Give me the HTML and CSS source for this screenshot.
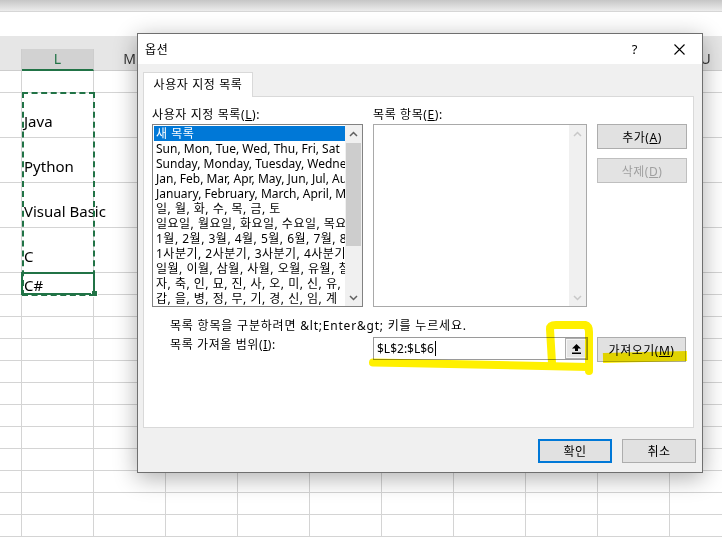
FILE: index.html
```html
<!DOCTYPE html>
<html lang="ko">
<head>
  <meta charset="UTF-8">
  <title>옵션 - 사용자 지정 목록</title>
  <link rel="stylesheet" href="styles.css">
</head>
<body>
  <div class="ribbon-edge"></div>
  <div class="formula-gap"></div>
  <div class="sheet-strip"></div>

  <div class="sheet">
    <div class="row head">
      <span></span><span class="on">L</span><span>M</span><span>N</span><span>O</span><span>P</span>
      <span>Q</span><span>R</span><span>S</span><span>T</span><span>U</span>
    </div>
    <div class="row"></div>
    <div class="row tall"><span class="cell">Java</span></div>
    <div class="row tall"><span class="cell">Python</span></div>
    <div class="row tall"><span class="cell">Visual Basic</span></div>
    <div class="row tall"><span class="cell">C</span></div>
    <div class="row"><span class="cell active">C#</span></div>
    <div class="row"></div>
    <div class="row"></div>
    <div class="row"></div>
    <div class="row"></div>
    <div class="row"></div>
    <div class="row"></div>
    <div class="row"></div>
    <div class="row"></div>
    <div class="row"></div>
    <div class="row"></div>
    <div class="row"></div>
  </div>

  <!-- copy marquee over L2:L6 -->
  <div class="marquee"></div>

  <div class="dialog">
    <div class="titlebar">
      <span class="title">옵션</span>
      <span class="tb-btn">?</span>
      <span class="tb-btn">
        <svg width="11" height="11" viewBox="0 0 11 11"><path d="M0.5 0.5 L10.5 10.5 M10.5 0.5 L0.5 10.5" stroke="#000" stroke-width="1.1" fill="none"/></svg>
      </span>
    </div>

    <div class="dlg-body">
      <div class="tabs"><div class="tab">사용자 지정 목록</div></div>

      <div class="panel">
        <div class="panel-grid">
          <div class="lbl">사용자 지정 목록(<u>L</u>):</div>
          <div class="lbl">목록 항목(<u>E</u>):</div>
          <span></span>

          <div class="listbox">
            <div class="items">
              <div class="item sel ko">새 목록</div>
              <div class="item">Sun, Mon, Tue, Wed, Thu, Fri, Sat</div>
              <div class="item">Sunday, Monday, Tuesday, Wednesday, Thursday, Friday, Saturday</div>
              <div class="item">Jan, Feb, Mar, Apr, May, Jun, Jul, Aug, Sep, Oct, Nov, Dec</div>
              <div class="item">January, February, March, April, May, June, July, August</div>
              <div class="item ko">일, 월, 화, 수, 목, 금, 토</div>
              <div class="item ko">일요일, 월요일, 화요일, 수요일, 목요일, 금요일, 토요일</div>
              <div class="item ko">1월, 2월, 3월, 4월, 5월, 6월, 7월, 8월, 9월, 10월, 11월, 12월</div>
              <div class="item ko">1사분기, 2사분기, 3사분기, 4사분기</div>
              <div class="item ko">일월, 이월, 삼월, 사월, 오월, 유월, 칠월, 팔월, 구월, 시월</div>
              <div class="item ko">자, 축, 인, 묘, 진, 사, 오, 미, 신, 유, 술, 해</div>
              <div class="item ko">갑, 을, 병, 정, 무, 기, 경, 신, 임, 계</div>
            </div>
            <div class="sb">
              <div class="sb-arrow"><svg width="9" height="6" viewBox="0 0 9 6"><polyline points="1,5 4.5,1.5 8,5" fill="none" stroke="#606060" stroke-width="1.5"/></svg></div>
              <div class="sb-track"><div class="sb-thumb"></div></div>
              <div class="sb-arrow"><svg width="9" height="6" viewBox="0 0 9 6"><polyline points="1,1 4.5,4.5 8,1" fill="none" stroke="#606060" stroke-width="1.5"/></svg></div>
            </div>
          </div>

          <div class="listbox empty">
            <div class="items"></div>
            <div class="sb">
              <div class="sb-arrow"><svg width="9" height="6" viewBox="0 0 9 6"><polyline points="1,5 4.5,1.5 8,5" fill="none" stroke="#c8c8c8" stroke-width="1.5"/></svg></div>
              <div class="sb-track"></div>
              <div class="sb-arrow"><svg width="9" height="6" viewBox="0 0 9 6"><polyline points="1,1 4.5,4.5 8,1" fill="none" stroke="#c8c8c8" stroke-width="1.5"/></svg></div>
            </div>
          </div>

          <div class="side-btns">
            <button class="btn">추가(<u>A</u>)</button>
            <button class="btn" disabled>삭제(<u>D</u>)</button>
          </div>

          <div class="hint">목록 항목을 구분하려면 &amp;lt;Enter&amp;gt; 키를 누르세요.</div>

          <div class="lbl indent">목록 가져올 범위(<u>I</u>):</div>
          <div class="ref-input">
            <span class="ref-value">$L$2:$L$6<i class="caret"></i></span>
            <span class="ref-btn">
              <svg width="9" height="10" viewBox="0 0 9 10"><path d="M4.5 0 L9 4.5 L6 4.5 L6 7 L3 7 L3 4.5 L0 4.5 Z M0 8.5 H9 V10 H0 Z" fill="#000"/></svg>
            </span>
          </div>
          <button class="btn import">가져오기(<u>M</u>)</button>
        </div>
      </div>

      <div class="footer">
        <button class="btn primary">확인</button>
        <button class="btn">취소</button>
      </div>
    </div>
  </div>

  <!-- highlighter marks drawn on the screenshot -->
  <svg class="marks" width="722" height="537" viewBox="0 0 722 537">
    <path d="M373 362.5 C450 364 530 366 588 367" />
    <path d="M552 363 L550 329 Q550 325 556 325 L585 325 Q589 326 589 332 L589 371" />
    <path class="flat" d="M603 358 L687 356" />
  </svg>
</body>
</html>
```

FILE: styles.css
```css
body {
  margin: 0;
  width: 722px;
  height: 537px;
  overflow: hidden;
  position: relative;
  background: #fff;
  font-family: "Noto Sans", "Noto Sans CJK KR", sans-serif;
  color: #000;
}

/* ---- spreadsheet behind the dialog ---- */
.ribbon-edge {
  height: 12px;
  box-sizing: border-box;
  background: linear-gradient(#c6c6c6, #ececec);
  border-bottom: 1px solid #d6d6d6;
}
.formula-gap {
  height: 24px;
}
.sheet-strip {
  height: 13px;
  background: #e6e6e6;
}
.sheet {
  background-color: #fff;
  background-image: linear-gradient(to right, #d4d4d4 1px, transparent 1px);
  background-size: 72px 100%;
  background-position: 21px 0;
}
.row {
  display: grid;
  grid-template-columns: 22px repeat(10, 72px);
  height: 22px;
  box-sizing: border-box;
  border-bottom: 1px solid #d4d4d4;
}
.row.tall {
  height: 45px;
}
.row.head {
  height: 22px;
  border-bottom: none;
}
.row.head span {
  background: #e6e6e6;
  border-right: 1px solid #cdcdcd;
  border-bottom: 1px solid #cdcdcd;
  font-size: 14px;
  line-height: 20px;
  text-align: center;
  color: #333;
}
.row.head span.on {
  background: #d2d2d2;
  color: #217346;
  border-bottom: 2px solid #217346;
}
.cell {
  grid-column: 2;
  display: flex;
  align-items: flex-end;
  padding: 0 0 7px 2px;
  font-size: 15px;
  line-height: 18px;
  white-space: nowrap;
}
.cell.active {
  padding-bottom: 0;
  outline: 2px solid #217346;
  outline-offset: -1px;
  position: relative;
}
.cell.active::after {
  content: "";
  position: absolute;
  right: -4px;
  bottom: -3px;
  width: 5px;
  height: 5px;
  background: #217346;
  border: 1px solid #fff;
}
.marquee {
  position: absolute;
  left: 22px;
  top: 92px;
  width: 73px;
  height: 204px;
  box-sizing: border-box;
  border: 2px dashed #217346;
}

/* ---- dialog ---- */
.dialog {
  position: absolute;
  left: 137px;
  top: 33px;
  width: 566px;
  height: 440px;
  box-sizing: border-box;
  border: 1px solid #6f6f6f;
  background: #f0f0f0;
  box-shadow: 0 5px 22px rgba(0, 0, 0, 0.32);
  font-size: 12px;
  display: flex;
  flex-direction: column;
}
.titlebar {
  height: 30px;
  background: #fff;
  display: flex;
  align-items: center;
}
.title {
  flex: 1;
  padding-left: 7px;
  font-size: 12px;
  letter-spacing: 0.8px;
}
.tb-btn {
  width: 45px;
  height: 30px;
  display: flex;
  align-items: center;
  justify-content: center;
  font-size: 13px;
}
.dlg-body {
  flex: 1;
  padding: 8px 8px 8px 5px;
  display: flex;
  flex-direction: column;
}
.tabs {
  display: flex;
}
.tab {
  width: 110px;
  height: 25px;
  box-sizing: border-box;
  margin-bottom: -1px;
  background: #fff;
  border: 1px solid #d9d9d9;
  border-bottom: none;
  text-align: center;
  line-height: 24px;
  letter-spacing: 0.6px;
  position: relative;
}
.panel {
  height: 332px;
  box-sizing: border-box;
  background: #fff;
  border: 1px solid #d9d9d9;
  padding: 10px 6px 0 8px;
}
.panel-grid {
  display: grid;
  grid-template-columns: 211px 214px 90px;
  column-gap: 10px;
  align-items: start;
}
.lbl {
  height: 17px;
  line-height: 15px;
  white-space: nowrap;
  letter-spacing: 0.6px;
}
.lbl.indent {
  padding-left: 18px;
  line-height: 16px;
}
.listbox {
  height: 183px;
  box-sizing: border-box;
  border: 1px solid #828282;
  display: flex;
  padding: 1px 0 0 1px;
}
.listbox.empty {
  border-color: #a9a9a9;
  padding-left: 0;
}
.items {
  flex: 1;
  overflow: hidden;
  white-space: nowrap;
}
.item {
  height: 15px;
  line-height: 15px;
  padding-left: 2px;
}
.item.ko {
  letter-spacing: 0.5px;
}
.item.sel {
  background: #0078d7;
  color: #fff;
}
.sb {
  width: 17px;
  margin-top: -1px;
  background: #f0f0f0;
  display: flex;
  flex-direction: column;
}
.sb-arrow {
  height: 17px;
  display: flex;
  align-items: center;
  justify-content: center;
}
.sb-track {
  flex: 1;
  padding: 1px 1px 0;
}
.sb-thumb {
  height: 103px;
  background: #cdcdcd;
}
.side-btns {
  display: flex;
  flex-direction: column;
  gap: 9px;
}
.btn {
  height: 25px;
  box-sizing: border-box;
  margin: 0;
  padding: 0;
  background: #e1e1e1;
  border: 1px solid #adadad;
  font-family: inherit;
  font-size: 12px;
  letter-spacing: 0.5px;
  color: #000;
}
.btn[disabled] {
  color: #a0a0a0;
  border-color: #bfbfbf;
  background: #e3e3e3;
}
.hint {
  grid-column: 1 / -1;
  margin-top: 11px;
  padding-left: 18px;
  line-height: 16px;
  letter-spacing: 0.8px;
}
.panel-grid > .lbl.indent,
.ref-input,
.import {
  margin-top: 3px;
}
.ref-input {
  height: 23px;
  box-sizing: border-box;
  border: 1px solid #9a9a9a;
  display: flex;
  width: 215px;
}
.ref-value {
  flex: 1;
  padding-left: 3px;
  line-height: 21px;
  display: flex;
  align-items: center;
}
.caret {
  display: inline-block;
  width: 1px;
  height: 15px;
  background: #000;
  margin-left: 1px;
}
.ref-btn {
  width: 22px;
  box-sizing: border-box;
  border: 1px solid #adadad;
  background: #e5e5e5;
  box-shadow: inset 0 0 0 1px #f6f6f6;
  display: flex;
  align-items: center;
  justify-content: center;
}
.import {
  width: 89px;
}
.footer {
  display: flex;
  justify-content: flex-end;
  gap: 10px;
  margin-top: 11px;
  margin-right: -2px;
}
.footer .btn {
  width: 74px;
  height: 24px;
}
.footer .btn.primary {
  border: 2px solid #0078d7;
}

/* ---- yellow highlighter ---- */
.marks {
  position: absolute;
  left: 0;
  top: 0;
  pointer-events: none;
  mix-blend-mode: multiply;
}
.marks path {
  fill: none;
  stroke: #fff000;
  stroke-width: 8;
  stroke-linecap: round;
  stroke-linejoin: round;
}
.marks path.flat {
  stroke-width: 10;
  stroke-linecap: butt;
}
```
